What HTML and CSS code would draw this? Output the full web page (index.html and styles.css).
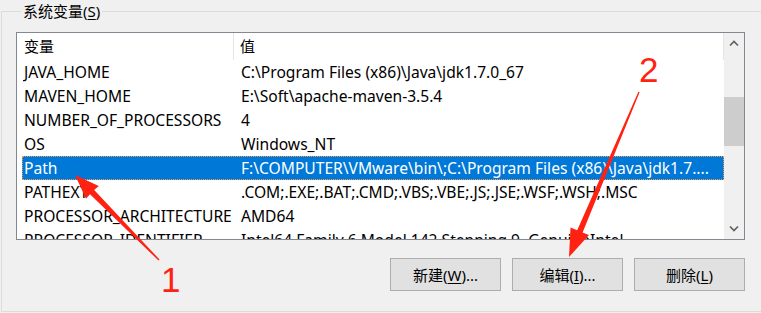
FILE: index.html
```html
<!DOCTYPE html>
<html>
<head>
<meta charset="utf-8">
<link rel="stylesheet" href="styles.css">
</head>
<body>
<div class="group">
  <div class="group-title">系统变量(<u>S</u>)</div>
  <div class="list">
    <div class="table">
      <div class="header">
        <div class="hcell c1">变量</div>
        <div class="hcell c2">值</div>
      </div>
      <div class="rows">
        <div class="row"><div class="cell c1">JAVA_HOME</div><div class="cell c2">C:\Program Files (x86)\Java\jdk1.7.0_67</div></div>
        <div class="row"><div class="cell c1">MAVEN_HOME</div><div class="cell c2">E:\Soft\apache-maven-3.5.4</div></div>
        <div class="row"><div class="cell c1">NUMBER_OF_PROCESSORS</div><div class="cell c2">4</div></div>
        <div class="row"><div class="cell c1">OS</div><div class="cell c2">Windows_NT</div></div>
        <div class="row selected"><div class="cell c1">Path</div><div class="cell c2">F:\COMPUTER\VMware\bin\;C:\Program Files (x86)\Java\jdk1.7....</div></div>
        <div class="row"><div class="cell c1">PATHEXT</div><div class="cell c2">.COM;.EXE;.BAT;.CMD;.VBS;.VBE;.JS;.JSE;.WSF;.WSH;.MSC</div></div>
        <div class="row"><div class="cell c1">PROCESSOR_ARCHITECTURE</div><div class="cell c2">AMD64</div></div>
        <div class="row"><div class="cell c1">PROCESSOR_IDENTIFIER</div><div class="cell c2">Intel64 Family 6 Model 142 Stepping 9, GenuineIntel</div></div>
      </div>
    </div>
    <div class="scrollbar">
      <div class="sb-btn">
        <svg width="10" height="6" viewBox="0 0 10 6"><path d="M1 5.5 L5 1.5 L9 5.5" fill="none" stroke="#606060" stroke-width="1.6"/></svg>
      </div>
      <div class="sb-track">
        <div class="sb-space-top"></div>
        <div class="sb-thumb"></div>
      </div>
      <div class="sb-btn">
        <svg width="10" height="6" viewBox="0 0 10 6"><path d="M1 0.5 L5 4.5 L9 0.5" fill="none" stroke="#606060" stroke-width="1.6"/></svg>
      </div>
    </div>
  </div>
  <div class="buttons">
    <div class="btn">新建(<u>W</u>)...</div>
    <div class="btn">编辑(<u>I</u>)...</div>
    <div class="btn">删除(<u>L</u>)</div>
  </div>
</div>

<svg class="annot" width="761" height="313" viewBox="0 0 761 313">
  <polygon fill="#ff2212" points="75,175 98.8,186 94.2,190 159.5,259.5 158.5,260.5 90,194.2 86,198.8"/>
  <polygon fill="#ff2212" points="569,257 570.5,227.5 577.2,230.2 638.4,91.7 639.6,92.3 582.6,232.4 589,235"/>
  <text class="num" x="161" y="292">1</text>
  <text class="num" x="639" y="82">2</text>
</svg>
</body>
</html>
```
FILE: styles.css
```css
* { box-sizing: border-box; }
html, body {
  margin: 0;
  padding: 0;
  background: #f0f0f0;
  width: 761px;
  height: 313px;
  overflow: hidden;
  font-family: "Noto Sans", "Noto Sans CJK SC", sans-serif;
  font-size: 15px;
  color: #000;
}
.group {
  margin: 11px 0 0 1px;
  width: 780px;
  height: 301px;
  border: 1px solid #dcdcdc;
  border-right: none;
  padding-left: 14px;
}
.group-title {
  margin: -10px 0 0 5px;
  width: fit-content;
  padding: 0 2px;
  background: #f0f0f0;
  line-height: 19px;
  height: 19px;
  white-space: nowrap;
}
.group-title u, .btn u { text-underline-offset: 2px; }
.list {
  margin-top: 11px;
  width: 729px;
  height: 208px;
  border: 1px solid #828790;
  background: #fff;
  display: flex;
  overflow: hidden;
}
.table {
  flex: 1;
  min-width: 0;
  overflow: hidden;
  font-size: 15.6px;
}
.header {
  display: flex;
  height: 27px;
  align-items: center;
}
.hcell {
  height: 27px;
  line-height: 27px;
  white-space: nowrap;
  font-size: 15px;
}
.hcell.c1 {
  width: 217px;
  padding-left: 7px;
  border-right: 1px solid #e5e5e5;
}
.hcell.c2 {
  flex: 1;
  padding-left: 6px;
  border-right: 1px solid #e5e5e5;
}
.row {
  display: flex;
  height: 24px;
  line-height: 22px;
  margin-left: 5px;
  border: 1px solid transparent;
  white-space: nowrap;
}
.row.selected {
  background: #0078d7;
  color: #fff;
  border: 1px dotted #f0a050;
}
.cell { overflow: hidden; }
.cell.c1 {
  width: 211px;
  flex: none;
  padding-left: 1px;
}
.cell.c2 {
  flex: 1;
  padding-left: 7px;
}
.scrollbar {
  width: 20px;
  flex: none;
  background: #f0f0f0;
  display: flex;
  flex-direction: column;
}
.sb-btn {
  height: 20px;
  display: flex;
  align-items: center;
  justify-content: center;
  flex: none;
}
.sb-track {
  flex: 1;
  display: flex;
  flex-direction: column;
}
.sb-space-top { height: 44px; }
.sb-thumb {
  height: 49px;
  background: #cdcdcd;
}
.buttons {
  width: 729px;
  margin-top: 18px;
  display: flex;
  justify-content: flex-end;
  gap: 11px;
}
.btn {
  width: 111px;
  height: 33px;
  background: #e1e1e1;
  border: 1px solid #adadad;
  display: flex;
  align-items: center;
  justify-content: center;
  white-space: nowrap;
}
.annot {
  position: absolute;
  top: 0;
  left: 0;
  pointer-events: none;
}
.num {
  font-family: "Liberation Sans", sans-serif;
  font-size: 35px;
  fill: #ff2212;
}
```
